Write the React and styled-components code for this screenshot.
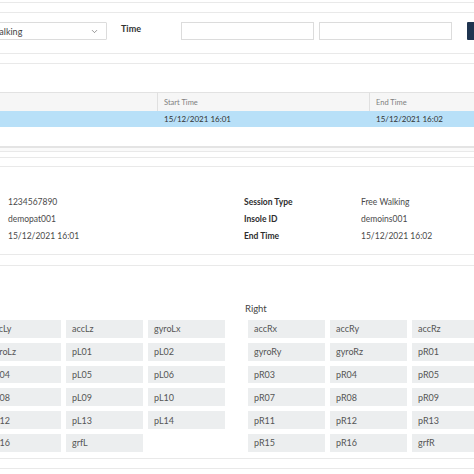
import React from "react";
import styled, { createGlobalStyle } from "styled-components";
import { ChevronDown } from "lucide-react";

const Global = createGlobalStyle`
  html, body { margin: 0; padding: 0; background: #fff; }
  body { font-family: Lato, "Open Sans", Arial, sans-serif; color: #333; }
  * { box-sizing: border-box; }
`;

const Viewport = styled.div`
  width: 474px;
  height: 474px;
  overflow: hidden;
  background: #fff;
`;

const Page = styled.div`
  width: 760px;
  margin-left: -120px;
  display: flex;
  flex-direction: column;
`;

const Card = styled.section`
  border-top: ${(p) => (p.$noTop ? "none" : "1px solid #e9e9e9")};
  border-bottom: ${(p) => (p.$noBottom ? "none" : "1px solid #e9e9e9")};
  margin-top: ${(p) => p.$mt || 0}px;
  padding: ${(p) => p.$pad || "0"};
  height: ${(p) => (p.$h ? `${p.$h}px` : "auto")};
  background: #fff;
`;

const FilterRow = styled.div`
  display: flex;
  align-items: flex-start;
  padding-left: 82px;
`;

const Select = styled.div`
  width: 145px;
  height: 18px;
  border: 1px solid #dcdcdc;
  border-radius: 1px;
  display: flex;
  align-items: center;
  justify-content: space-between;
  padding: 0 7px 0 8px;
  font-size: 9px;
  color: #444;
`;

const FieldLabel = styled.div`
  width: 60px;
  margin-left: 14px;
  font-size: 9px;
  font-weight: 700;
  color: #333;
  padding-top: 1px;
`;

const TextInput = styled.div`
  width: 133px;
  height: 18px;
  border: 1px solid #dcdcdc;
  margin-right: ${(p) => p.$mr || 0}px;
`;

const DarkButton = styled.div`
  width: 60px;
  height: 18px;
  background: #1f3450;
  border-radius: 1px;
`;

const Table = styled.div`
  margin-top: 28px;
  margin-left: 20px;
  display: grid;
  grid-template-columns: 257px 212px 212px;
`;

const HeadCell = styled.div`
  height: 19px;
  background: #f6f6f6;
  border-top: 1px solid #e2e2e2;
  border-left: ${(p) => (p.$first ? "none" : "1px solid #e0e0e0")};
  font-size: 7.5px;
  color: #808080;
  display: flex;
  align-items: center;
  padding-left: 6px;
`;

const RowCell = styled.div`
  height: 16px;
  background: #b8e0f8;
  font-size: 8px;
  color: #333;
  display: flex;
  align-items: center;
  padding-left: 7px;
`;

const TableFoot = styled.div`
  height: 19px;
`;

const Scrollbar = styled.div`
  height: 5px;
  border-top: 2px solid #e4e4e4;
  background: #fafafa;
`;

const Details = styled.div`
  display: grid;
  grid-template-columns: 117px 236px 117px 200px;
  grid-auto-rows: 17px;
  padding-left: 11px;
  align-items: center;
  font-size: 8.5px;
`;

const DLabel = styled.div`
  font-weight: 700;
  color: #2e2e2e;
`;

const DValue = styled.div`
  color: #4a4a4a;
`;

const Sensors = styled.div`
  display: flex;
  gap: 20px;
  padding-left: 19px;
`;

const Group = styled.div`
  display: flex;
  flex-direction: column;
`;

const GroupTitle = styled.div`
  font-size: 9.5px;
  color: #444;
  height: 12px;
  line-height: 12px;
  margin-bottom: 5px;
`;

const ChipGrid = styled.div`
  display: grid;
  grid-template-columns: repeat(4, 77px);
  grid-auto-rows: 17.8px;
  column-gap: 5px;
  row-gap: 5px;
  padding-left: 3px;
`;

const Chip = styled.div`
  background: #eceeef;
  font-size: 9px;
  color: #555;
  display: flex;
  align-items: center;
  padding-left: 6px;
`;

const left = [
  "accLx", "accLy", "accLz", "gyroLx",
  "gyroLy", "gyroLz", "pL01", "pL02",
  "pL03", "pL04", "pL05", "pL06",
  "pL07", "pL08", "pL09", "pL10",
  "pL11", "pL12", "pL13", "pL14",
  "pL15", "pL16", "grfL",
];
const right = [
  "accRx", "accRy", "accRz", "gyroRx",
  "gyroRy", "gyroRz", "pR01", "pR02",
  "pR03", "pR04", "pR05", "pR06",
  "pR07", "pR08", "pR09", "pR10",
  "pR11", "pR12", "pR13", "pR14",
  "pR15", "pR16", "grfR",
];

export default function App() {
  return (
    <>
      <Global />
      <Viewport>
        <Page>
          <Card $noTop $h={3} />
          <Card $mt={9} $pad="9px 0 13px 0">
            <FilterRow>
              <Select>
                <span>Free Walking</span>
                <ChevronDown size={9} strokeWidth={1.6} color="#555" />
              </Select>
              <FieldLabel>Time</FieldLabel>
              <TextInput $mr={5} />
              <TextInput $mr={15} />
              <DarkButton />
            </FilterRow>
          </Card>
          <Card $mt={9} $noBottom>
            <Table>
              <HeadCell $first>Session ID</HeadCell>
              <HeadCell>Start Time</HeadCell>
              <HeadCell>End Time</HeadCell>
              <RowCell>S0001</RowCell>
              <RowCell>15/12/2021 16:01</RowCell>
              <RowCell>15/12/2021 16:02</RowCell>
            </Table>
            <TableFoot />
            <Scrollbar />
          </Card>
          <Card $mt={0} $h={1} $noTop />
          <Card $mt={5} $h={9} $noBottom />
          <Card $pad="26px 0 10px 0">
            <Details>
              <DLabel>Patient ID</DLabel>
              <DValue>1234567890</DValue>
              <DLabel>Session Type</DLabel>
              <DValue>Free Walking</DValue>
              <DLabel>Patient Name</DLabel>
              <DValue>demopat001</DValue>
              <DLabel>Insole ID</DLabel>
              <DValue>demoins001</DValue>
              <DLabel>Start Time</DLabel>
              <DValue>15/12/2021 16:01</DValue>
              <DLabel>End Time</DLabel>
              <DValue>15/12/2021 16:02</DValue>
            </Details>
          </Card>
          <Card $mt={10} $pad="37px 0 6px 0">
            <Sensors>
              <Group>
                <GroupTitle>Left</GroupTitle>
                <ChipGrid>
                  {left.map((s) => (
                    <Chip key={s}>{s}</Chip>
                  ))}
                </ChipGrid>
              </Group>
              <Group>
                <GroupTitle>Right</GroupTitle>
                <ChipGrid>
                  {right.map((s) => (
                    <Chip key={s}>{s}</Chip>
                  ))}
                </ChipGrid>
              </Group>
            </Sensors>
          </Card>
          <Card $mt={9} $noBottom $h={20} />
        </Page>
      </Viewport>
    </>
  );
}
